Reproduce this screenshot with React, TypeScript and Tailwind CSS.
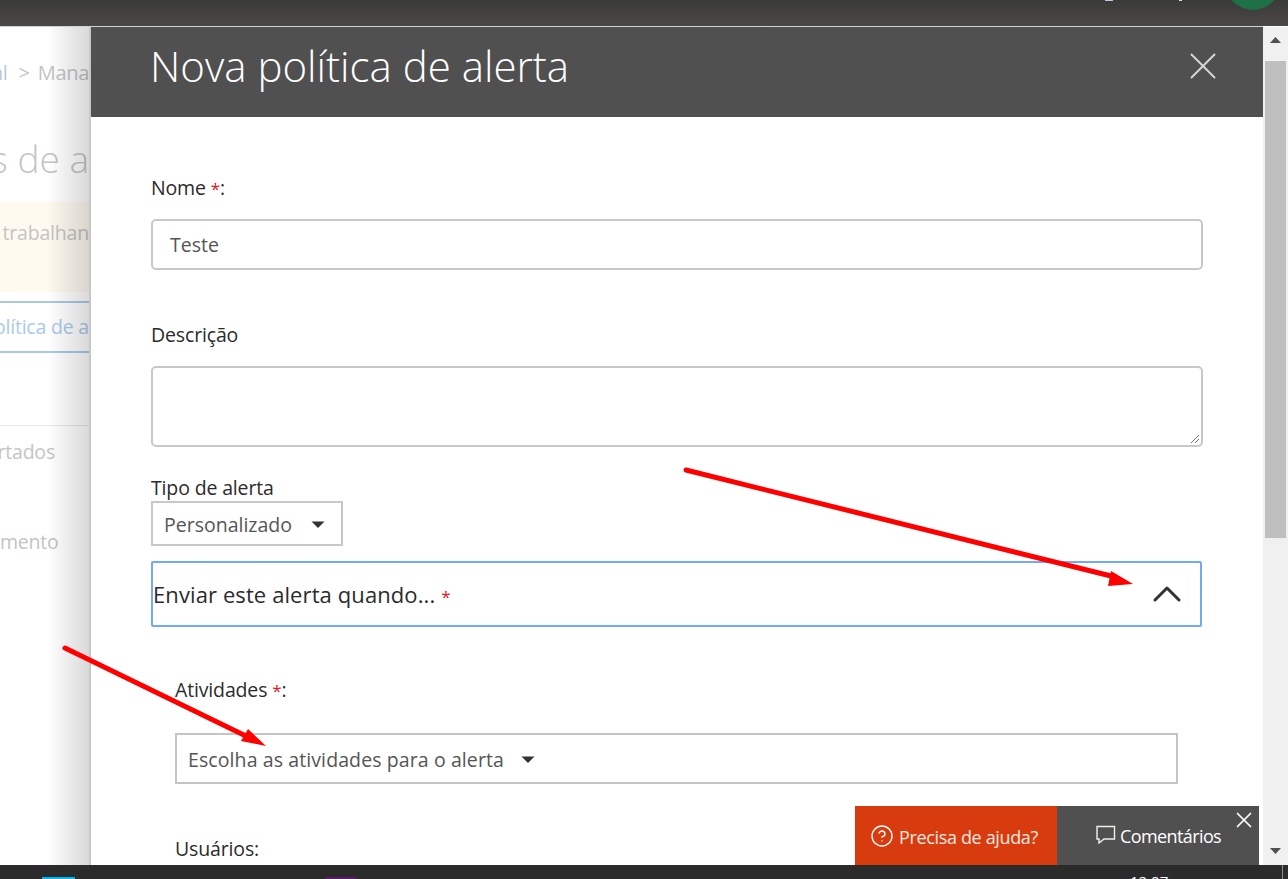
import React from 'react';
import { X, ChevronUp, CircleHelp } from 'lucide-react';

const font = "font-['Open_Sans','Noto_Sans',sans-serif]";

const Caret = () => (
  <svg width="14" height="7" viewBox="0 0 14 7" className="shrink-0" aria-hidden="true">
    <path d="M0.5 0.5h13L7 7z" fill="#333" />
  </svg>
);

const Required = () => <span className="text-[#e81123] text-[17px]">*</span>;

const Label: React.FC<{ children: React.ReactNode; className?: string }> = ({ children, className }) => (
  <div className={`text-[19.5px] leading-[24px] font-medium text-[#2b2b2b] tracking-[-0.15px] ${className ?? ''}`}>{children}</div>
);

const BackgroundPage = () => (
  <div className="relative w-[89px] shrink-0 overflow-hidden text-[#c4c4c4] whitespace-nowrap">
    <div className="flex justify-end h-[34px] mt-[29px] text-[20px] leading-[34px] tracking-[-0.3px]">
      <span className="text-[#b7c7d8]">al</span>
      <span className="ml-[11px]">&gt;</span>
      <span className="ml-2">Mana</span>
    </div>
    <div className="flex justify-end h-[52px] mt-[43px] text-[37px] leading-[52px] font-light">s de a</div>
    <div className="h-[90px] mt-[17px] bg-[#fefaf0] flex justify-end pt-[19px] text-[19.5px] leading-[24px] tracking-[-0.2px]">
      trabalhan
    </div>
    <div className="h-[52px] mt-[9px] border-y-2 border-[#a9c9e5] flex items-center justify-end text-[19.5px] text-[#a9cbe8] tracking-[-0.2px]">
      olítica de a
    </div>
    <div className="h-[52px] mt-[72px] border-t border-[#e8e8e8] flex items-center justify-end text-[19.5px] tracking-[-0.2px] pr-[34px]">
      rtados
    </div>
    <div className="h-[52px] mt-[39px] flex items-center text-[19.5px] tracking-[-0.2px]">mento</div>
    <div className="absolute inset-y-0 right-0 w-[42px] bg-gradient-to-r from-transparent to-[#00000026]" />
  </div>
);

const Scrollbar = () => (
  <div className="w-[25px] shrink-0 bg-[#f0f0f0] flex flex-col items-center">
    <svg width="11" height="6" viewBox="0 0 11 6" className="mt-[10px] mb-[18px]" aria-hidden="true">
      <path d="M0 6L5.5 0L11 6z" fill="#505050" />
    </svg>
    <div className="w-[21px] h-[477px] bg-[#bfbfbf]" />
    <svg width="11" height="6" viewBox="0 0 11 6" className="mt-auto mb-[11px]" aria-hidden="true">
      <path d="M0 0L5.5 6L11 0z" fill="#505050" />
    </svg>
  </div>
);

const FormPanel = () => (
  <div className="flex-1 min-w-0 border-l-2 border-[#c8c8c8] bg-white flex flex-col overflow-hidden">
    <div className="h-[90px] shrink-0 bg-[#505050] flex items-center justify-between pl-[59px] pr-[37px] pb-[12px] text-white">
      <h1 className="text-[42px] leading-[52px] font-light">Nova política de alerta</h1>
      <X size={46} strokeWidth={1} className="text-[#d6d6d6]" />
    </div>
    <div className="pl-[60px] pr-[60px] pt-[59px]">
      <Label>
        Nome <Required />:
      </Label>
      <div className="mt-[18px] h-[51px] border-2 border-[#c8c8c8] rounded-[5px] flex items-center pl-[17px] text-[19.5px] text-[#555]">
        Teste
      </div>
      <Label className="mt-[53px]">Descrição</Label>
      <div className="relative mt-[19px] h-[81px] border-2 border-[#c8c8c8] rounded-[5px]">
        <svg width="10" height="10" viewBox="0 0 10 10" className="absolute right-[1px] bottom-[1px]" aria-hidden="true">
          <path d="M1 9L9 1M5 9L9 5" stroke="#777" strokeWidth="1" />
        </svg>
      </div>
      <Label className="mt-[29px]">Tipo de alerta</Label>
      <div className="mt-px w-[192px] h-[45px] border-2 border-[#c8c8c8] flex items-center pl-[11px] pt-[2px] gap-[19px] text-[19.5px] text-[#555]">
        Personalizado
        <Caret />
      </div>
      <div className="mt-[15px] mr-px h-[66px] border-2 border-[#74a7f5] rounded-[2px] flex items-center justify-between pr-[9px] text-[#2b2b2b]">
        <span className="text-[22px] font-medium tracking-[0.1px]">
          Enviar este alerta quando... <Required />
        </span>
        <ChevronUp size={48} strokeWidth={1.5} className="text-[#333]" />
      </div>
      <div className="pl-[24px] pr-[25px]">
        <Label className="mt-[51px]">
          Atividades <Required />:
        </Label>
        <div className="mt-[30px] h-[51px] border-2 border-[#c4c4c4] flex items-center pl-[11px] pt-[2px] gap-[17px] text-[19.5px] text-[#555] tracking-[0.1px]">
          Escolha as atividades para o alerta
          <Caret />
        </div>
        <Label className="mt-[53px]">Usuários:</Label>
      </div>
    </div>
  </div>
);

const HelpWidgets = () => (
  <div className="absolute left-[855px] top-[806px] w-[404px] h-[59px] flex text-white text-[18px]">
    <div className="w-[202px] bg-[#d83b0d] flex items-center pl-[15px] gap-[5px] tracking-[-0.35px]">
      <CircleHelp size={24} strokeWidth={1.4} />
      <span className="text-[#fbe9e3] mt-[3px]">Precisa de ajuda?</span>
    </div>
    <div className="relative w-[202px] bg-[#505050] flex items-center pl-[39px] gap-[4px] tracking-[-0.6px]">
      <svg width="20" height="19" viewBox="0 0 20 19" className="mb-[3px]" aria-hidden="true">
        <path d="M1 1.5h17.5v12.5H8l-5 4v-4H1z" fill="none" stroke="#f1efe6" strokeWidth="1.4" />
      </svg>
      <span className="mt-px">Comentários</span>
      <X size={26} strokeWidth={1.6} className="absolute right-[2px] top-px" />
    </div>
  </div>
);

const Arrows = () => (
  <svg className="absolute inset-0 pointer-events-none" width="1288" height="879" viewBox="0 0 1288 879" aria-hidden="true">
    <line x1="686" y1="470" x2="1115" y2="577" stroke="#fe0000" strokeWidth="5" strokeLinecap="round" />
    <path d="M1133 584L1111 571L1108 586z" fill="#fe0000" />
    <line x1="65" y1="648" x2="250" y2="738" stroke="#fe0000" strokeWidth="5" strokeLinecap="round" />
    <path d="M266 746L248 729L241 741z" fill="#fe0000" />
  </svg>
);

export default function App() {
  return (
    <div className={`relative w-[1288px] h-[879px] overflow-hidden bg-white flex flex-col ${font}`}>
      <div className="relative h-[26px] shrink-0 bg-gradient-to-b from-[#3a3a38] to-[#4a4846] flex justify-end pr-[7px] overflow-hidden">
        <div className="absolute left-[1105px] top-0 w-[8px] h-px bg-[#b9c9e8]" />
        <div className="absolute left-[1179px] top-0 w-[3px] h-px bg-[#e8d8c8]" />
        <div className="w-[56px] h-[56px] shrink-0 rounded-full bg-[#1e7145] -mt-[46px]" />
      </div>
      <div className="h-px w-[1263px] shrink-0 bg-[#d2d2d2]" />
      <div className="h-[838px] shrink-0 flex">
        <BackgroundPage />
        <FormPanel />
        <Scrollbar />
      </div>
      <div className="relative h-[14px] shrink-0 bg-[#2b2b2b] overflow-hidden">
        <div className="absolute left-[42px] top-[12px] w-[33px] h-[2px] bg-[#00b7f1]" />
        <div className="absolute left-[325px] top-[12px] w-[32px] h-[2px] rounded-t-full bg-[#5c1a6b]" />
        <div className="absolute left-[1130px] top-[6px] text-[15px] leading-[20px] text-white">12:07</div>
        <div className="absolute left-[1282px] top-0 w-px h-[14px] bg-[#8a8a8a]" />
      </div>
      <HelpWidgets />
      <Arrows />
    </div>
  );
}
